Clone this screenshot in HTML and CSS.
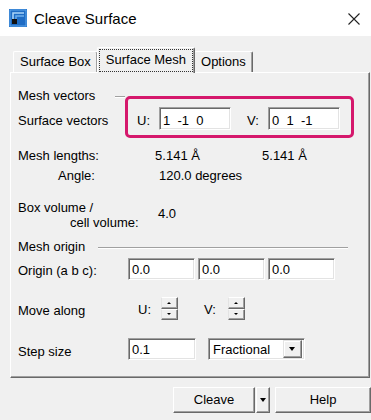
FILE: index.html
```html
<!DOCTYPE html>
<html>
<head>
<meta charset="utf-8">
<link rel="stylesheet" href="styles.css">
</head>
<body>
<div class="titlebar">
  <svg class="app-icon" width="18" height="18" viewBox="0 0 18 18">
    <rect x="0" y="0" width="18" height="18" fill="#1f6cc4"/>
    <rect x="1" y="1" width="16" height="16" fill="none" stroke="#5fa6ea" stroke-width="1"/>
    <path d="M4 15 V4 H15" fill="none" stroke="#a9d4f7" stroke-width="1.6"/>
    <path d="M7 15 V7 H15" fill="none" stroke="#6fb0ec" stroke-width="1.4"/>
    <rect x="3" y="10" width="5" height="5" fill="#111"/>
  </svg>
  <span class="title">Cleave Surface</span>
  <svg class="close" width="14" height="12" viewBox="0 0 14 12">
    <path d="M1.5 0.5 L12.5 11.5 M12.5 0.5 L1.5 11.5" stroke="#222" stroke-width="1.1" fill="none"/>
  </svg>
</div>

<div class="main">
  <div class="tabs">
    <div class="tab">Surface Box</div>
    <div class="tab active"><span class="focus">Surface Mesh</span></div>
    <div class="tab">Options</div>
  </div>

  <div class="panel">
    <div class="vectors">
      <div class="vec-labels">
        <div class="grp-head">
          <span>Mesh vectors</span>
          <span class="grp-line vec-line"></span>
        </div>
        <div class="sub-label">Surface vectors</div>
      </div>
      <div class="hl-box">
        <span class="axis">U:</span>
        <div class="field vfield">1  -1  0</div>
        <span class="axis axis-v">V:</span>
        <div class="field vfield">0  1  -1</div>
      </div>
    </div>

    <div class="info-row lengths">
      <span class="info-label">Mesh lengths:</span>
      <span class="info-val">5.141 Å</span>
      <span class="info-val">5.141 Å</span>
    </div>
    <div class="info-row angle">
      <span class="info-label indent-angle">Angle:</span>
      <span class="info-val">120.0 degrees</span>
    </div>

    <div class="volume">
      <div class="vol-labels">
        <div>Box volume /</div>
        <div class="indent-cell">cell volume:</div>
      </div>
      <span class="vol-val">4.0</span>
    </div>

    <div class="grp-head origin-head">
      <span>Mesh origin</span>
      <span class="grp-line origin-line"></span>
    </div>

    <div class="form-row origin-row">
      <span class="row-label">Origin (a b c):</span>
      <div class="field ofield">0.0</div>
      <div class="field ofield">0.0</div>
      <div class="field ofield">0.0</div>
    </div>

    <div class="form-row move-row">
      <span class="row-label move-label">Move along</span>
      <span class="spin-label">U:</span>
      <div class="spinner">
        <div class="spin-btn"><span class="tri-up"></span></div>
        <div class="spin-btn"><span class="tri-down"></span></div>
      </div>
      <span class="spin-label spin-v">V:</span>
      <div class="spinner">
        <div class="spin-btn"><span class="tri-up"></span></div>
        <div class="spin-btn"><span class="tri-down"></span></div>
      </div>
    </div>

    <div class="form-row step-row">
      <span class="row-label">Step size</span>
      <div class="field sfield">0.1</div>
      <div class="field combo">
        <span class="combo-text">Fractional</span>
        <span class="combo-btn"><span class="tri-down big"></span></span>
      </div>
    </div>
  </div>

  <div class="buttons">
    <div class="btn cleave">Cleave</div>
    <div class="btn split"><span class="tri-down big"></span></div>
    <div class="btn help">Help</div>
  </div>
</div>
</body>
</html>
```

FILE: styles.css
```css
html, body {
  margin: 0;
  padding: 0;
}
body {
  width: 371px;
  height: 420px;
  overflow: hidden;
  background: #f0f0f0;
  font-family: "Liberation Sans", Arial, sans-serif;
  font-size: 13px;
  color: #000;
}

/* title bar */
.titlebar {
  height: 36px;
  background: #fff;
  display: flex;
  align-items: center;
  padding-left: 9px;
  box-sizing: border-box;
}
.app-icon {
  margin-right: 7px;
  margin-top: -1px;
}
.title {
  flex: 1;
  font-size: 15px;
  color: #000;
}
.close {
  margin-right: 10px;
  margin-top: 1px;
}

/* main area */
.main {
  padding: 11px 0 0 10px;
}

.tabs {
  display: flex;
  align-items: flex-end;
  height: 25px;
  padding-left: 3px;
  position: relative;
  z-index: 2;
}
.tab {
  height: 21px;
  box-sizing: border-box;
  padding: 0 6px;
  line-height: 20px;
  border-top: 1px solid #fff;
  border-left: 1px solid #fff;
  border-right: 1px solid #696969;
  box-shadow: inset -1px 0 #a0a0a0;
  border-radius: 2px 2px 0 0;
  background: #f0f0f0;
  white-space: nowrap;
}
.tab.active {
  height: 26px;
  margin: 0 -1px -1px -1px;
  padding: 2px 2px 0 2px;
  line-height: 19px;
  position: relative;
  z-index: 3;
}
.focus {
  display: block;
  outline: 1px dotted #333;
  padding: 0 6px;
  height: 21px;
  line-height: 19px;
}

.panel {
  width: 360px;
  height: 306px;
  box-sizing: border-box;
  border-top: 1px solid #fff;
  border-left: 1px solid #fff;
  border-right: 1px solid #696969;
  border-bottom: 1px solid #696969;
  box-shadow: inset -1px -1px #a0a0a0;
  padding: 15px 0 0 7px;
  position: relative;
  z-index: 1;
}

/* vectors group */
.vectors {
  display: flex;
  height: 50px;
}
.vec-labels {
  width: 107px;
}
.grp-head {
  display: flex;
  height: 16px;
  line-height: 16px;
}
.grp-line {
  height: 0;
  margin-top: 8px;
  border-top: 1px solid #a0a0a0;
  border-bottom: 1px solid #fff;
}
.vec-line {
  flex: 1;
  margin-left: 20px;
}
.sub-label {
  margin-top: 9px;
  line-height: 16px;
}
.hl-box {
  width: 229px;
  height: 42px;
  margin-top: 8px;
  box-sizing: border-box;
  border: 3px solid #d5186c;
  border-radius: 5px;
  display: flex;
  align-items: flex-start;
  padding: 8px 0 0 9px;
}
.axis {
  width: 22px;
  line-height: 16px;
  margin-top: 6px;
}
.axis-v {
  width: 21px;
  margin-left: 16px;
}

/* text fields */
.field {
  background: #fff;
  box-sizing: border-box;
  border-top: 1px solid #a0a0a0;
  border-left: 1px solid #a0a0a0;
  border-right: 1px solid #fff;
  border-bottom: 1px solid #fff;
  box-shadow: inset 1px 1px #696969, inset -1px -1px #e3e3e3;
  padding-left: 3px;
  white-space: pre;
  overflow: hidden;
}
.vfield {
  width: 72px;
  height: 23px;
  padding-top: 5px;
  line-height: 16px;
}

/* info rows */
.info-row {
  display: flex;
  line-height: 16px;
  height: 16px;
}
.lengths {
  margin-top: 10px;
}
.angle {
  margin-top: 4px;
}
.info-label {
  width: 141px;
  box-sizing: border-box;
}
.info-val {
  width: 110px;
}
.indent-angle {
  padding-left: 40px;
}

.volume {
  display: flex;
  align-items: center;
  margin-top: 16px;
  line-height: 15px;
}
.vol-labels {
  width: 140px;
}
.indent-cell {
  padding-left: 52px;
}
.vol-val {
  margin-top: -4px;
}

.origin-head {
  margin-top: 9px;
}
.origin-line {
  flex: 1;
  margin-left: 13px;
  margin-right: 21px;
}

/* form rows */
.form-row {
  display: flex;
  align-items: center;
}
.row-label {
  width: 110px;
  line-height: 16px;
}
.origin-row {
  margin-top: 3px;
  height: 22px;
}
.ofield {
  width: 67px;
  height: 22px;
  margin-right: 3px;
  line-height: 18px;
  padding-top: 2px;
}
.origin-row .row-label {
  margin-top: 4px;
}

.move-row {
  margin-top: 17px;
  height: 23px;
}
.move-label {
  width: 120px;
  margin-top: 5px;
}
.spin-label {
  width: 23px;
  margin-top: 2px;
}
.spin-v {
  margin-left: 26px;
  width: 24px;
}
.spinner {
  width: 17px;
  height: 23px;
  display: flex;
  flex-direction: column;
}
.spin-btn {
  flex: 1;
  box-sizing: border-box;
  border-top: 1px solid #fff;
  border-left: 1px solid #e3e3e3;
  border-right: 1px solid #696969;
  border-bottom: 1px solid #696969;
  box-shadow: inset -1px -1px #a0a0a0;
  display: flex;
  align-items: center;
  justify-content: center;
  background: #f0f0f0;
}
.tri-up {
  width: 0;
  height: 0;
  border-left: 2px solid transparent;
  border-right: 2px solid transparent;
  border-bottom: 2px solid #000;
  margin-right: 1px;
}
.tri-down {
  width: 0;
  height: 0;
  border-left: 2px solid transparent;
  border-right: 2px solid transparent;
  border-top: 2px solid #000;
  margin-right: 1px;
}
.tri-down.big {
  border-left-width: 3.5px;
  border-right-width: 3.5px;
  border-top-width: 4px;
}

.step-row {
  margin-top: 18px;
  height: 22px;
}
.step-row .row-label {
  margin-top: 6px;
}
.sfield {
  width: 68px;
  height: 22px;
  line-height: 18px;
  padding-top: 2px;
}
.combo {
  width: 97px;
  height: 22px;
  margin-left: 12px;
  display: flex;
  align-items: center;
  padding: 0 2px 0 4px;
}
.combo-text {
  flex: 1;
  line-height: 18px;
  padding-top: 2px;
}
.combo-btn {
  width: 19px;
  height: 18px;
  box-sizing: border-box;
  border-top: 1px solid #e3e3e3;
  border-left: 1px solid #e3e3e3;
  border-right: 1px solid #696969;
  border-bottom: 1px solid #696969;
  box-shadow: inset -1px -1px #a0a0a0, inset 1px 1px #fff;
  background: #f0f0f0;
  display: flex;
  align-items: center;
  justify-content: center;
}

/* dialog buttons */
.buttons {
  display: flex;
  margin-top: 9px;
  margin-left: 163px;
  height: 26px;
}
.btn {
  box-sizing: border-box;
  height: 26px;
  border-top: 1px solid #fff;
  border-left: 1px solid #fff;
  border-right: 1px solid #696969;
  border-bottom: 1px solid #696969;
  box-shadow: inset -1px -1px #a0a0a0;
  background: #f0f0f0;
  display: flex;
  align-items: center;
  justify-content: center;
  line-height: 16px;
}
.cleave {
  width: 82px;
}
.split {
  width: 14px;
  margin-left: 1px;
}
.help {
  width: 96px;
  margin-left: 5px;
}
```
